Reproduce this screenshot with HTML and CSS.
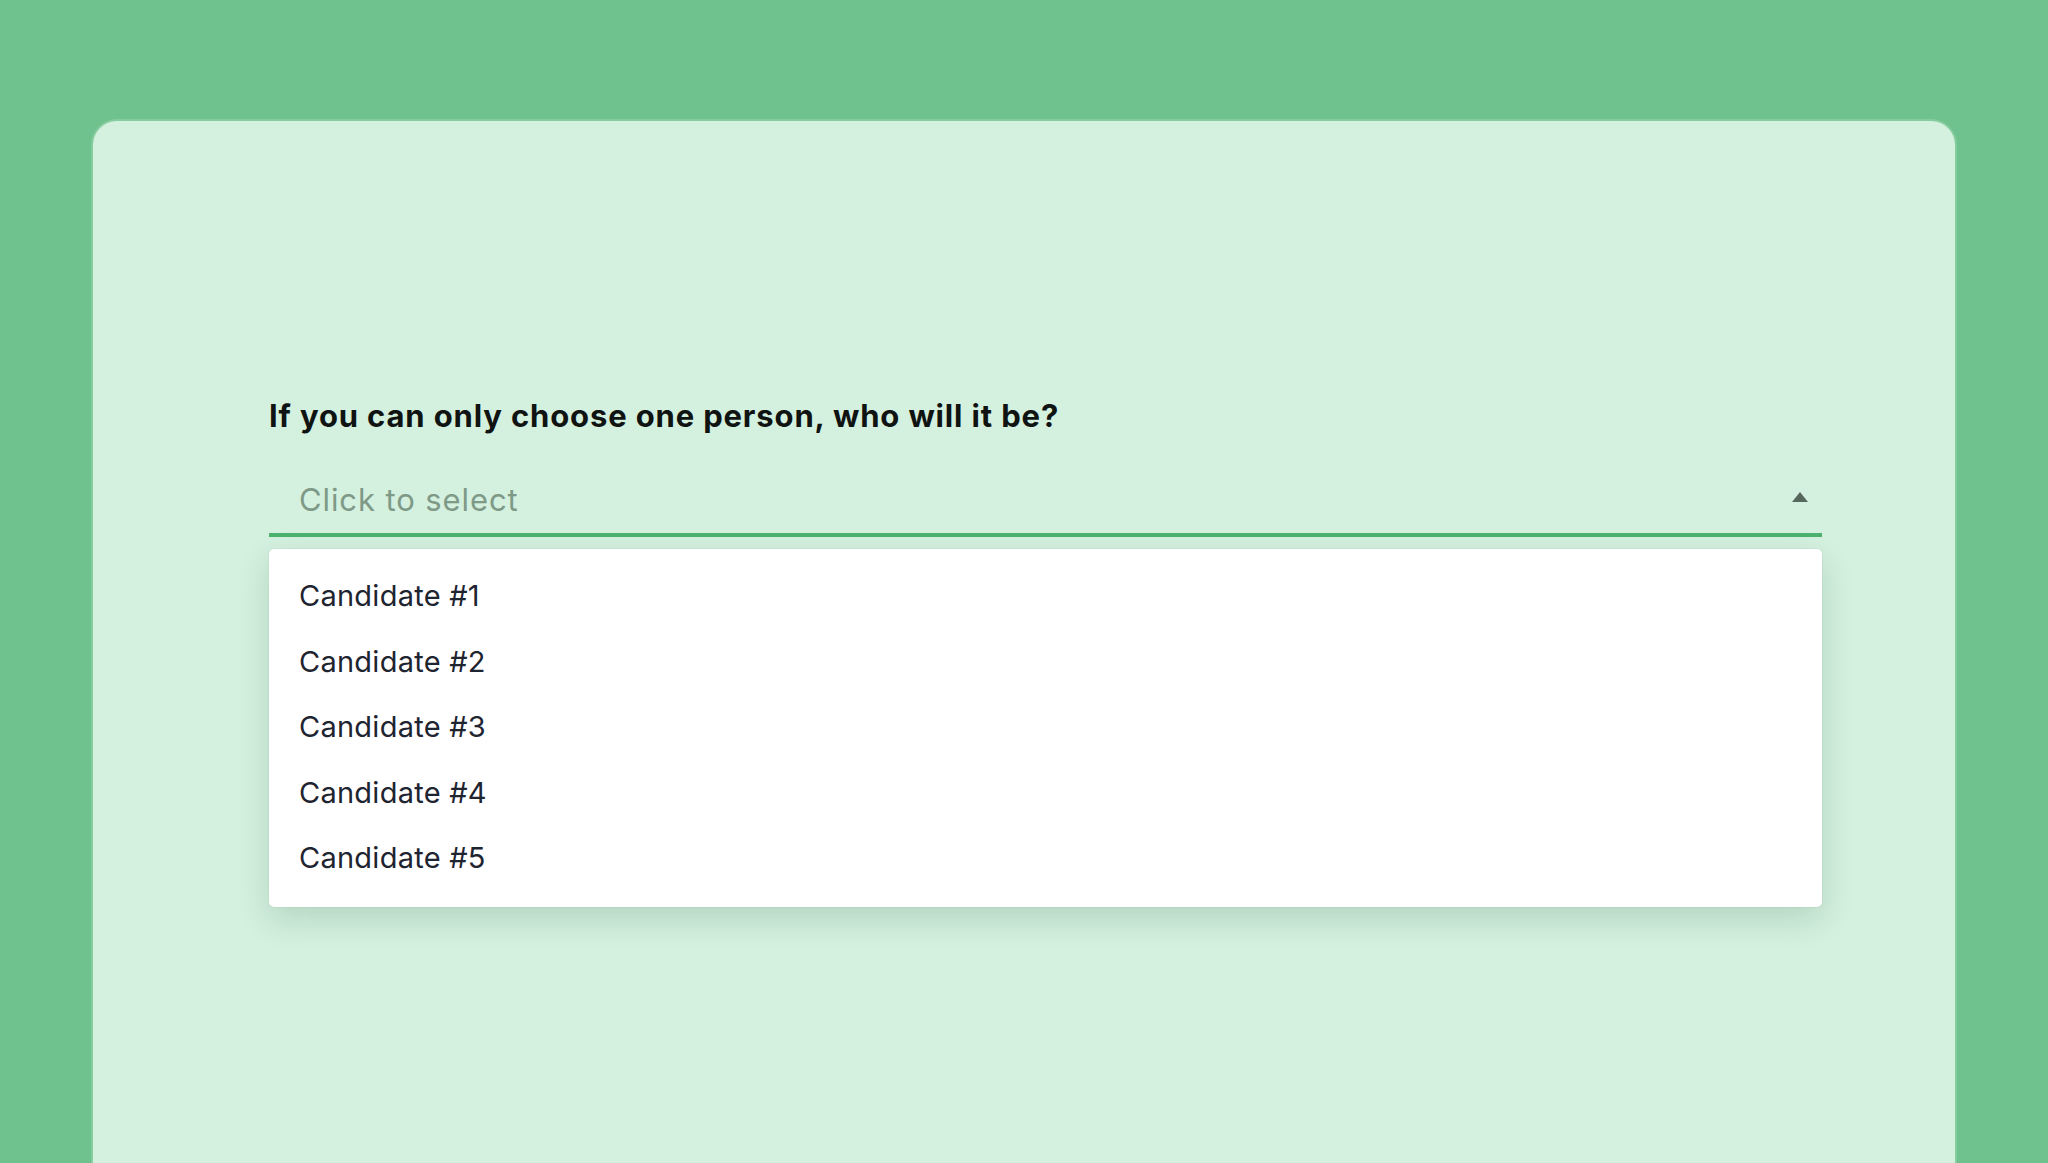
FILE: index.html
```html
<!DOCTYPE html>
<html lang="en">
<head>
  <meta charset="UTF-8">
  <meta name="viewport" content="width=device-width, initial-scale=1.0">
  <title>Poll</title>
  <link rel="stylesheet" href="styles.css">
</head>
<body>

<div class="card">
  <div class="question">
    <h2 class="question-title">If you can only choose one person, who will it be?</h2>

    <div class="select">
      <div class="select-field">
        <span class="select-placeholder">Click to select</span>
        <svg class="select-caret" width="16" height="10" viewBox="0 0 16 10">
          <path d="M8 0 L16 10 L0 10 Z" fill="#56685c"/>
        </svg>
      </div>

      <ul class="select-menu">
        <li class="select-option">Candidate #1</li>
        <li class="select-option">Candidate #2</li>
        <li class="select-option">Candidate #3</li>
        <li class="select-option">Candidate #4</li>
        <li class="select-option">Candidate #5</li>
      </ul>
    </div>
  </div>
</div>

</body>
</html>
```

FILE: styles.css
```css
html, body {
  height: 100%;
}
body {
  font-family: Inter, "Noto Sans", sans-serif;
  background-color: #6fc18d;
  margin: 0;
  padding: 0;
  overflow: hidden;
}
.card {
  margin: 121px 0 0 93px;
  width: 1862px;
  height: 1080px;
  box-sizing: border-box;
  padding: 276px 0 0 176px;
  background-color: #d4f0df;
  border-radius: 24px;
  box-shadow: 0 0 0 2px rgba(160, 220, 180, 0.45);
}
.question {
  width: 1553px;
}
.question-title {
  margin: 0;
  font-size: 31px;
  line-height: 38px;
  font-weight: 700;
  letter-spacing: 0.85px;
  color: #0f1311;
}
.select {
  margin-top: 33px;
}
.select-field {
  display: flex;
  justify-content: space-between;
  align-items: center;
  padding: 12px 14px 13px 30px;
  border-bottom: 4px solid #4bb270;
}
.select-placeholder {
  font-size: 31px;
  line-height: 40px;
  letter-spacing: 0.9px;
  color: #7e9a87;
}
.select-caret {
  margin-top: -6px;
}
.select-menu {
  list-style: none;
  margin: 12px 0 0 0;
  padding: 14px 0 16px;
  background-color: #fff;
  border-radius: 5px;
  box-shadow: 0 12px 32px rgba(20, 80, 45, 0.16), 0 0 0 1px rgba(0, 0, 0, 0.03);
}
.select-option {
  padding-left: 30px;
  height: 65.5px;
  line-height: 65.5px;
  font-size: 29px;
  letter-spacing: 0.25px;
  color: #1e2430;
}
```
